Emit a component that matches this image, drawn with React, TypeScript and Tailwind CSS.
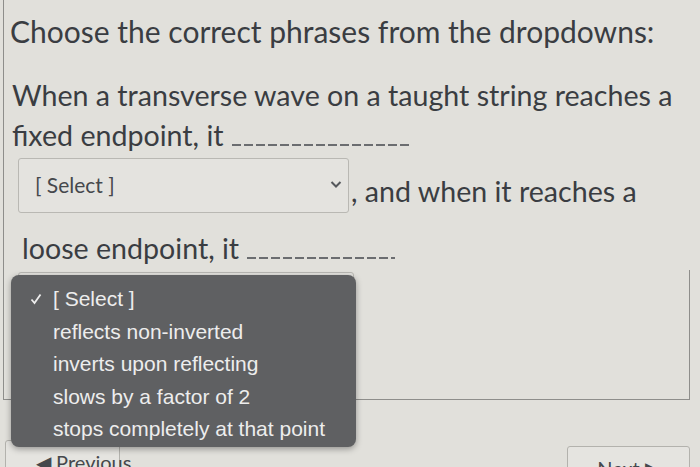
import React from "react";

const options = [
  "reflects non-inverted",
  "inverts upon reflecting",
  "slows by a factor of 2",
  "stops completely at that point",
];

function Blank({ width }: { width: number }) {
  return (
    <span
      className="inline-block h-[2px] align-baseline ml-[8px] bg-[repeating-linear-gradient(90deg,#6b6d70_0_9px,transparent_9px_12px)]"
      style={{ width }}
    />
  );
}

function SelectBox({ className, label }: { className: string; label?: string }) {
  return (
    <div
      className={`flex items-center justify-between rounded-[3px] border border-[#b9b8b3] bg-[#e4e3df] ${className}`}
    >
      <span className="text-[21px] text-[#45484c] pl-[16px] -mt-[2px]">{label}</span>
      <svg width="12" height="9" viewBox="0 0 12 9" className="mr-[6px] -mt-[2px]">
        <path d="M1.5 2 L6 6.5 L10.5 2" fill="none" stroke="#55585c" strokeWidth="2" />
      </svg>
    </div>
  );
}

export default function App() {
  return (
    <div
      className="relative h-[467px] w-[700px] overflow-hidden bg-[#e1e0db] text-[#3a3d42]"
      style={{ fontFamily: "Lato, 'Noto Sans', sans-serif" }}
    >
      <div className="ml-[3px] w-[687px] h-[400px] border-l border-b border-[#8e8e8b] flex flex-col">
        <p className="pl-[6px] pt-[11px] text-[30px] leading-[40px]">
          Choose the correct phrases from the dropdowns:
        </p>
        <p className="pl-[8px] mt-[24px] text-[28.6px] leading-[40px]">
          When a transverse wave on a taught string reaches a
        </p>
        <p className="pl-[8px] text-[28.6px] leading-[40px]">
          fixed endpoint, it
          <Blank width={178} />
        </p>
        <div className="flex items-center mt-[3px] pl-[14px]">
          <SelectBox className="w-[331px] h-[55px]" label="[ Select ]" />
          <span className="text-[28.6px] leading-[40px] ml-[2px] mt-[10px]">
            , and when it reaches a
          </span>
        </div>
        <p className="pl-[18px] mt-[15px] text-[28.6px] leading-[40px]">
          loose endpoint, it
          <Blank width={148} />
        </p>
        {/* second select sits under the open menu */}
        <div className="flex-1 mt-[2px] border-r border-[#8e8e8b] pl-[14px] pt-[2px]">
          <SelectBox className="w-[336px] h-[55px]" />
        </div>
      </div>

      <div className="flex mt-[40px]">
        <div className="ml-[5px] w-[115px] h-[44px] rounded-[3px] border border-[#b3b2ad] bg-[#e5e4e0] flex items-start pt-[9px] pl-[30px] text-[20px] leading-[24px] text-[#45484c] whitespace-nowrap">
          <span>◀ Previous</span>
        </div>
        <div className="ml-auto mr-[10px] mt-[6px] w-[123px] h-[44px] rounded-[3px] border border-[#b3b2ad] bg-[#e5e4e0] flex items-start justify-center pt-[9px] text-[20px] leading-[24px] text-[#45484c] whitespace-nowrap">
          <span>Next ▶</span>
        </div>
      </div>

      <div
        className="absolute left-[11px] top-[275px] w-[345px] h-[172px] rounded-[8px] bg-[#5f6062] shadow-[0_2px_6px_rgba(0,0,0,0.35)] pt-[8px] text-[21px] leading-[32.5px] text-[#ededed]"
        style={{ fontFamily: "'Liberation Sans', Arial, sans-serif" }}
      >
        <div className="flex items-center pl-[19px]">
          <svg width="12" height="12" viewBox="0 0 12 12" className="mr-[11px]">
            <path d="M1.5 6.5 L4.5 10 L10.5 1.5" fill="none" stroke="#ededed" strokeWidth="1.8" />
          </svg>
          <span>[ Select ]</span>
        </div>
        {options.map((o) => (
          <div key={o} className="pl-[42px]">
            {o}
          </div>
        ))}
      </div>
    </div>
  );
}
